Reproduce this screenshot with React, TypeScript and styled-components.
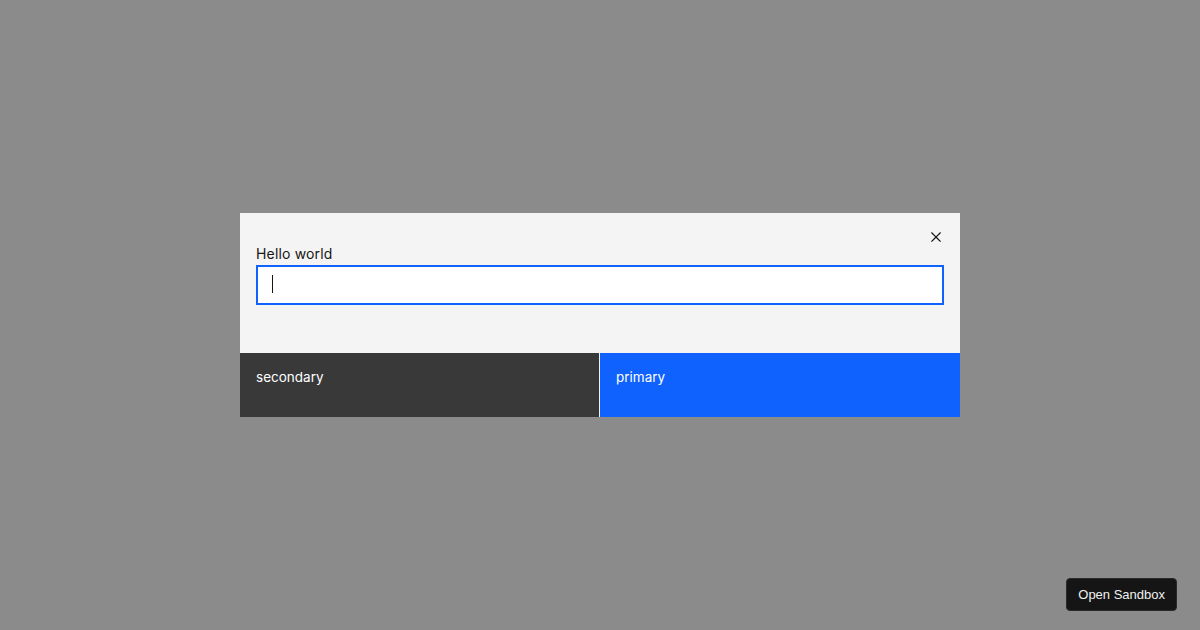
import styled, { createGlobalStyle } from "styled-components";

const Global = createGlobalStyle`
  html, body { margin: 0; padding: 0; }
  body {
    width: 1200px;
    height: 630px;
    overflow: hidden;
    font-family: "Inter", "Noto Sans", sans-serif;
  }
`;

export default function App() {
  return (
    <>
      <Global />
      <Overlay>
        <Modal>
          <CloseButton aria-label="close">
            <svg width="20" height="20" viewBox="0 0 32 32" fill="#161616">
              <path d="M24 9.4 22.6 8 16 14.6 9.4 8 8 9.4 14.6 16 8 22.6 9.4 24 16 17.4 22.6 24 24 22.6 17.4 16 24 9.4z" />
            </svg>
          </CloseButton>
          <Body>
            <Label htmlFor="hello">Hello world</Label>
            <Field>
              <Input id="hello" />
              <Caret />
            </Field>
          </Body>
          <Footer>
            <FooterButton $kind="secondary">secondary</FooterButton>
            <FooterButton $kind="primary">primary</FooterButton>
          </Footer>
        </Modal>
        <SandboxButton>Open Sandbox</SandboxButton>
      </Overlay>
    </>
  );
}

const Overlay = styled.div`
  width: 1200px;
  height: 630px;
  background: #8b8b8b;
  display: flex;
  align-items: center;
  justify-content: center;
  position: relative;
`;

const Modal = styled.div`
  width: 720px;
  background: #f4f4f4;
  position: relative;
  display: flex;
  flex-direction: column;
`;

const CloseButton = styled.button`
  position: absolute;
  top: 0;
  right: 0;
  width: 48px;
  height: 48px;
  border: none;
  background: transparent;
  display: flex;
  align-items: center;
  justify-content: center;
  padding: 0;
`;

const Body = styled.div`
  padding: 32px 16px 48px;
  display: flex;
  flex-direction: column;
`;

const Label = styled.label`
  font-size: 14px;
  line-height: 18px;
  letter-spacing: 0.16px;
  color: #161616;
  margin-bottom: 2px;
`;

const Field = styled.div`
  position: relative;
`;

const Input = styled.input`
  display: block;
  box-sizing: border-box;
  height: 40px;
  width: 100%;
  border: 2px solid #0f62fe;
  outline: none;
  background: #ffffff;
  padding: 0 14px;
  font-family: inherit;
  font-size: 14px;
  color: #161616;
`;

const Caret = styled.span`
  position: absolute;
  left: 16px;
  top: 10px;
  width: 1px;
  height: 18px;
  background: #161616;
`;

const Footer = styled.div`
  display: grid;
  grid-template-columns: 359px 1fr;
  gap: 1px;
  height: 64px;
`;

const FooterButton = styled.button<{ $kind: "primary" | "secondary" }>`
  border: none;
  margin: 0;
  text-align: left;
  padding: 14px 16px;
  display: flex;
  align-items: flex-start;
  font-family: "Inter", "Noto Sans", sans-serif;
  font-size: 13.5px;
  line-height: 20px;
  letter-spacing: 0;
  color: #ffffff;
  background: ${(p) => (p.$kind === "primary" ? "#0f62fe" : "#393939")};
`;

const SandboxButton = styled.button`
  position: absolute;
  right: 23px;
  bottom: 19px;
  height: 33px;
  padding: 0 11px;
  border: 1px solid #2a2a2a;
  border-radius: 4px;
  background: #151515;
  color: #f0f0f0;
  font-family: "Liberation Sans", Arial, sans-serif;
  font-size: 13px;
`;
